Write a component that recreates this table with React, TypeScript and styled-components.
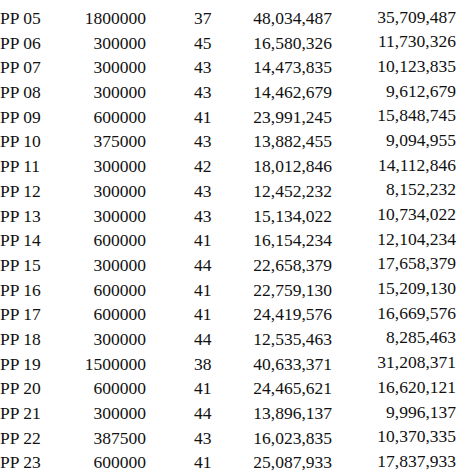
import React from 'react';
import styled, {createGlobalStyle} from 'styled-components';

const rows: [string, string, string, string, string][] = [
    ['PP 05', '1800000', '37', '48,034,487', '35,709,487'],
    ['PP 06', '300000', '45', '16,580,326', '11,730,326'],
    ['PP 07', '300000', '43', '14,473,835', '10,123,835'],
    ['PP 08', '300000', '43', '14,462,679', '9,612,679'],
    ['PP 09', '600000', '41', '23,991,245', '15,848,745'],
    ['PP 10', '375000', '43', '13,882,455', '9,094,955'],
    ['PP 11', '300000', '42', '18,012,846', '14,112,846'],
    ['PP 12', '300000', '43', '12,452,232', '8,152,232'],
    ['PP 13', '300000', '43', '15,134,022', '10,734,022'],
    ['PP 14', '600000', '41', '16,154,234', '12,104,234'],
    ['PP 15', '300000', '44', '22,658,379', '17,658,379'],
    ['PP 16', '600000', '41', '22,759,130', '15,209,130'],
    ['PP 17', '600000', '41', '24,419,576', '16,669,576'],
    ['PP 18', '300000', '44', '12,535,463', '8,285,463'],
    ['PP 19', '1500000', '38', '40,633,371', '31,208,371'],
    ['PP 20', '600000', '41', '24,465,621', '16,620,121'],
    ['PP 21', '300000', '44', '13,896,137', '9,996,137'],
    ['PP 22', '387500', '43', '16,023,835', '10,370,335'],
    ['PP 23', '600000', '41', '25,087,933', '17,837,933'],
]

function App() {
    return (
        <>
            <GlobalStyle/>
            <Table>
                {rows.map(r => (
                    <Row key={r[0]}>
                        <Name>{r[0]}</Name>
                        <Num>{r[1]}</Num>
                        <Count>{r[2]}</Count>
                        <Num>{r[3]}</Num>
                        <Num raised>{r[4]}</Num>
                    </Row>
                ))}
            </Table>
        </>
    )
}

export default App;

const GlobalStyle = createGlobalStyle`
    body {
        margin: 0;
        background: #ffffff;
    }
`
const Table = styled.div`
    width: 474px;
    height: 474px;
    overflow: hidden;
    padding-top: 6px;
    box-sizing: border-box;
    font-family: "Liberation Serif", "Times New Roman", serif;
    font-size: 17.5px;
    color: #111111;
`
const Row = styled.div`
    display: grid;
    grid-template-columns: 80px 66px 94px 92px 124px;
    height: 24.7px;
    line-height: 24.7px;
    white-space: nowrap;
`
const Name = styled.div`
    text-align: left;
`
const Num = styled.div<{ raised?: boolean }>`
    text-align: right;
    position: relative;
    top: ${p => (p.raised ? '-1.5px' : '0')};
`
const Count = styled.div`
    text-align: left;
    padding-left: 48px;
`
